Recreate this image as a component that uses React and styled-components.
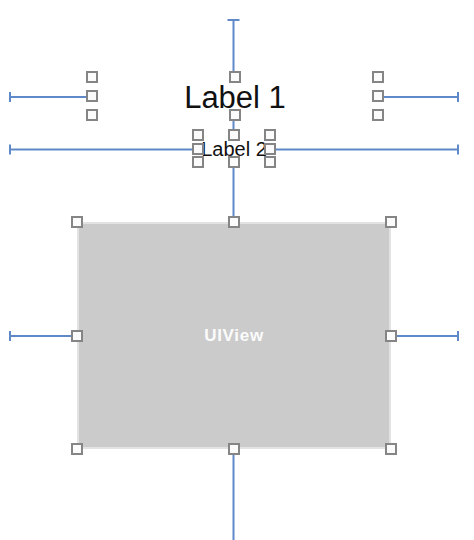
import React from "react";
import styled, { createGlobalStyle } from "styled-components";

const GlobalStyle = createGlobalStyle`
  html, body {
    margin: 0;
    padding: 0;
    background: #ffffff;
  }
  body {
    font-family: "Liberation Sans", Arial, sans-serif;
  }
`;

const Canvas = styled.div`
  position: relative;
  width: 474px;
  height: 540px;
  overflow: hidden;
  background: #ffffff;
`;

// constraint guides sit behind the frames
const Guides = styled.svg`
  position: absolute;
  inset: 0;
  width: 474px;
  height: 540px;
`;

const Frame = styled.div`
  position: absolute;
  left: ${(p) => p.$x}px;
  top: ${(p) => p.$y}px;
  width: ${(p) => p.$w}px;
  height: ${(p) => p.$h}px;
  display: flex;
  align-items: center;
  justify-content: center;
`;

const LabelText = styled.span`
  font-family: "Liberation Sans", Arial, sans-serif;
  font-size: ${(p) => p.$size}px;
  color: #111111;
  white-space: nowrap;
  line-height: 1;
  padding-top: ${(p) => p.$nudge || 0}px;
`;

const ViewBox = styled.div`
  position: absolute;
  inset: 0;
  background: #cbcbcb;
  border: 2px solid #e2e2e2;
  display: flex;
  align-items: center;
  justify-content: center;
`;

const ViewTitle = styled.span`
  font-family: "Liberation Sans", Arial, sans-serif;
  font-weight: 700;
  font-size: 17px;
  letter-spacing: 0.7px;
  color: #fbfbfb;
`;

const Handle = styled.span`
  position: absolute;
  left: ${(p) => p.$fx * 100}%;
  top: ${(p) => p.$fy * 100}%;
  width: 12px;
  height: 12px;
  box-sizing: border-box;
  transform: translate(-50%, -50%);
  border: 2px solid #858585;
  background: #fbfbfb;
  z-index: 2;
`;

const HANDLE_SPOTS = [
  [0, 0], [0.5, 0], [1, 0],
  [0, 0.5], [1, 0.5],
  [0, 1], [0.5, 1], [1, 1],
];

const Selected = ({ x, y, w, h, children }) => (
  <Frame $x={x} $y={y} $w={w} $h={h}>
    {children}
    {HANDLE_SPOTS.map(([fx, fy]) => (
      <Handle key={`${fx}-${fy}`} $fx={fx} $fy={fy} />
    ))}
  </Frame>
);

const BLUE = "#5f89c8";

// horizontal guide with an end cap on the far side
const HGuide = ({ x1, x2, y, cap }) => (
  <g stroke={BLUE} strokeWidth="2">
    <line x1={x1} y1={y} x2={x2} y2={y} />
    <line x1={cap} y1={y - 5} x2={cap} y2={y + 5} />
  </g>
);

const VGuide = ({ y1, y2, x, cap }) => (
  <g stroke={BLUE} strokeWidth="2">
    <line x1={x} y1={y1} x2={x} y2={y2} />
    {cap != null && <line x1={x - 6} y1={cap} x2={x + 6} y2={cap} />}
  </g>
);

const App = () => {
  return (
    <>
      <GlobalStyle />
      <Canvas>
        <Guides viewBox="0 0 474 540">
          <VGuide x={233.5} y1={20} y2={77} cap={20} />
          <VGuide x={233.5} y1={115} y2={135} />
          <VGuide x={233.5} y1={162} y2={222} />
          <VGuide x={233.5} y1={449} y2={540} />
          <HGuide x1={10} x2={92} y={97} cap={10} />
          <HGuide x1={378} x2={458} y={97} cap={458} />
          <HGuide x1={10} x2={198} y={149.5} cap={10} />
          <HGuide x1={270} x2={458} y={149.5} cap={458} />
          <HGuide x1={10} x2={77} y={336} cap={10} />
          <HGuide x1={391} x2={458} y={336} cap={458} />
        </Guides>

        <Selected x={92} y={77} w={286} h={38}>
          <LabelText $size={31} $nudge={2}>Label 1</LabelText>
        </Selected>

        <Selected x={198} y={135} w={72} h={27}>
          <LabelText $size={20} $nudge={1}>Label 2</LabelText>
        </Selected>

        <Selected x={77} y={222} w={314} h={227}>
          <ViewBox>
            <ViewTitle>UIView</ViewTitle>
          </ViewBox>
        </Selected>
      </Canvas>
    </>
  );
};

export default App;
